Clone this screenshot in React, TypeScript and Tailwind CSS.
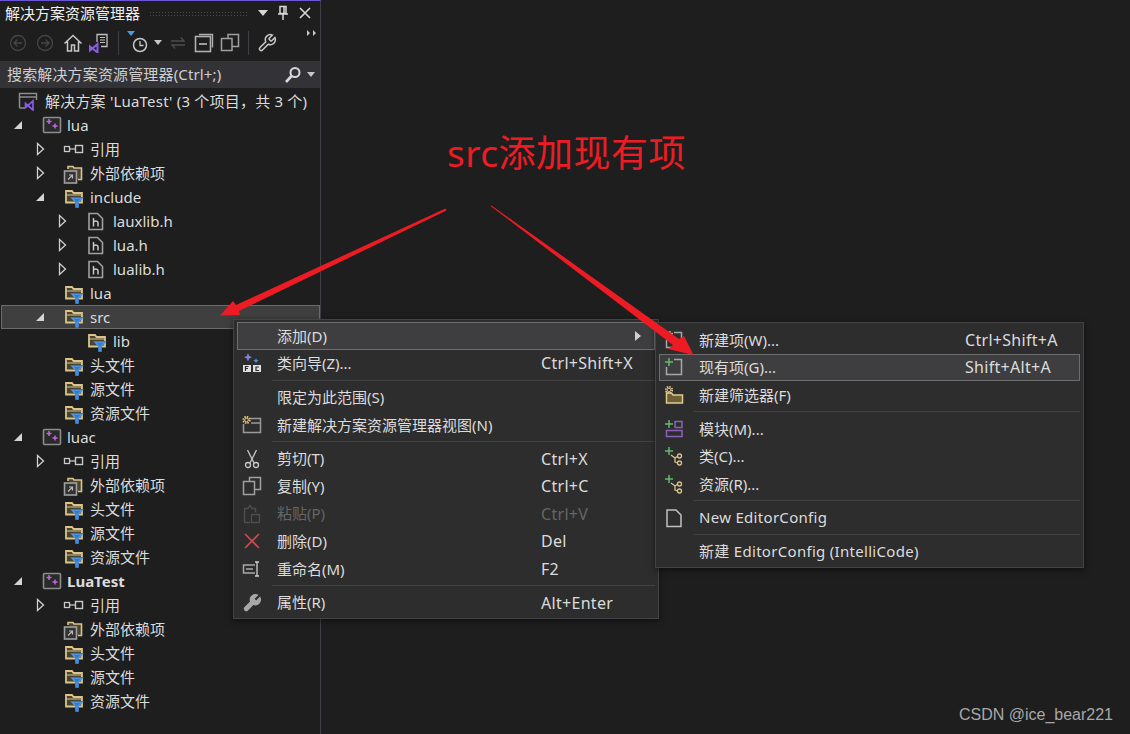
import type { ReactNode } from 'react';

const uiFont = "font-['Noto_Sans','Noto_Sans_CJK_SC',sans-serif]";
const wrenchPath = 'M14.700 6.300a1 1 0 0 0 0 1.400l1.600 1.600a1 1 0 0 0 1.400 0l3.770-3.770a6 6 0 0 1-7.940 7.940l-6.910 6.910a2.120 2.120 0 0 1-3-3l6.910-6.910a6 6 0 0 1 7.940-7.940l-3.760 3.760z';

function Svg({ children, w = 20, h = 20 }: { children: ReactNode; w?: number; h?: number }) {
    return (
        <svg width={w} height={h} viewBox={`0 0 ${w} ${h}`} fill="none" className="shrink-0 overflow-visible">
            {children}
        </svg>
    );
}

function FolderFilter() {
    return (
        <Svg>
            <path d="M3 15.500V4h6l1.500 2H19v9.500z" fill="#4a432f" stroke="#d8c48c" strokeWidth="1.800" />
            <path d="M3 8h16" stroke="#d8c48c" strokeWidth="1" />
            <path d="M8 10h12l-4.200 5v6h-3.600v-6z" fill="#1e1e1e" />
            <path d="M9 11h10l-4 4.500V20h-2v-4.500z" fill="#3a7cc4" stroke="#4a97e6" strokeWidth="1.500" />
        </Svg>
    );
}

function Reference() {
    return (
        <Svg>
            <rect x="1.500" y="7.500" width="5" height="5" stroke="#c8c8c8" strokeWidth="1.300" />
            <rect x="12.500" y="6.500" width="7" height="7" stroke="#c8c8c8" strokeWidth="1.400" />
            <path d="M6.500 10h6" stroke="#c8c8c8" strokeWidth="1.300" />
        </Svg>
    );
}

function ExternalDeps() {
    return (
        <Svg>
            <path d="M5 6V3.500h5l1 1.500h7.500v11.500H15" fill="#4a432f" stroke="#d8c48c" strokeWidth="1.600" />
            <rect x="1.500" y="8" width="12" height="12" fill="#333" stroke="#a0a0a0" strokeWidth="1.600" />
            <path d="M5 16.500l4-4M6 12h3.500v3.500" stroke="#b8b8b8" strokeWidth="1.200" />
        </Svg>
    );
}

function HeaderFile() {
    return (
        <Svg>
            <path d="M3 2.500h8.500l5 5v11H3z" stroke="#a0a0a0" strokeWidth="1.600" />
            <path d="M7.500 7v8.500M7.500 11c2-1.500 4.500-1 4.500 1v3.500" stroke="#c8c8c8" strokeWidth="1.500" />
        </Svg>
    );
}

function ProjectIcon() {
    return (
        <Svg>
            <rect x="1.500" y="2.500" width="17" height="15" rx="1" fill="#2a2a2a" stroke="#8d8d8d" strokeWidth="1.600" />
            <path d="M4.500 6.500h5M7 4v5M10.500 11h5M13 8.500v5" stroke="#c264e0" strokeWidth="1.500" />
        </Svg>
    );
}

function SolutionIcon() {
    return (
        <svg width="20" height="20" viewBox="0 0 20 20" fill="none" className="shrink-0">
            <path d="M7 17H2.500a1 1 0 0 1-1-1V2.500h17V9" stroke="#8d8d8d" strokeWidth="1.500" />
            <path d="M2 6h16" stroke="#8d8d8d" strokeWidth="1.500" />
            <path d="M7.500 12.500l2.500 2 5-4.500v9l-5-4.500-2.500 2z" stroke="#8a5ce6" strokeWidth="1.700" />
        </svg>
    );
}

function Gear({ x, y, color }: { x: number; y: number; color: string }) {
    return (
        <>
            <circle cx={x} cy={y} r="3.200" stroke={color} strokeWidth="1.800" strokeDasharray="1.500 1" />
            <circle cx={x} cy={y} r="1.800" stroke={color} strokeWidth="1" />
        </>
    );
}

function Expander({ open }: { open?: boolean }) {
    return open ? (
        <svg width="16" height="16" viewBox="0 0 16 16" className="shrink-0">
            <path d="M12 4v8H4z" fill="#d4d4d4" />
        </svg>
    ) : (
        <svg width="16" height="16" viewBox="0 0 16 16" fill="none" className="shrink-0">
            <path d="M5.500 2.500l6 5.500-6 5.500z" stroke="#cfcfcf" strokeWidth="1.300" />
        </svg>
    );
}

type Kind = 'project' | 'ref' | 'ext' | 'filter' | 'header';

const iconFor: Record<Kind, ReactNode> = {
    project: <ProjectIcon />,
    ref: <Reference />,
    ext: <ExternalDeps />,
    filter: <FolderFilter />,
    header: <HeaderFile />,
};

type Node = {
    text: string;
    kind: Kind;
    level: 0 | 1 | 2;
    state?: 'open' | 'closed';
    bold?: boolean;
    selected?: boolean;
};

const levelPad = { 0: 'pl-[10px]', 1: 'pl-[32px]', 2: 'pl-[54px]' };
const labelGap = { 0: 'ml-[5px]', 1: 'ml-[7px]', 2: 'ml-[7px]' };
const expanderGap = { 0: 'mr-[16px]', 1: 'mr-[15px]', 2: 'mr-[16px]' };

const projectChildren = (): Node[] => [
    { text: '头文件', kind: 'filter', level: 1 },
    { text: '源文件', kind: 'filter', level: 1 },
    { text: '资源文件', kind: 'filter', level: 1 },
];

const tree: Node[] = [
    { text: 'lua', kind: 'project', level: 0, state: 'open' },
    { text: '引用', kind: 'ref', level: 1, state: 'closed' },
    { text: '外部依赖项', kind: 'ext', level: 1, state: 'closed' },
    { text: 'include', kind: 'filter', level: 1, state: 'open' },
    { text: 'lauxlib.h', kind: 'header', level: 2, state: 'closed' },
    { text: 'lua.h', kind: 'header', level: 2, state: 'closed' },
    { text: 'lualib.h', kind: 'header', level: 2, state: 'closed' },
    { text: 'lua', kind: 'filter', level: 1 },
    { text: 'src', kind: 'filter', level: 1, state: 'open', selected: true },
    { text: 'lib', kind: 'filter', level: 2 },
    ...projectChildren(),
    { text: 'luac', kind: 'project', level: 0, state: 'open' },
    { text: '引用', kind: 'ref', level: 1, state: 'closed' },
    { text: '外部依赖项', kind: 'ext', level: 1 },
    ...projectChildren(),
    { text: 'LuaTest', kind: 'project', level: 0, state: 'open', bold: true },
    { text: '引用', kind: 'ref', level: 1, state: 'closed' },
    { text: '外部依赖项', kind: 'ext', level: 1 },
    ...projectChildren(),
];

function TreeRow({ node }: { node: Node }) {
    const rowClass = node.selected
        ? 'bg-[#3f3f3f] border border-[#6b6b6b] ml-[1px] pl-[30px]'
        : levelPad[node.level];
    return (
        <div className={`h-6 flex items-center ${rowClass}`}>
            <div className={`w-4 h-4 ${expanderGap[node.level]} shrink-0`}>
                {node.state && <Expander open={node.state === 'open'} />}
            </div>
            {iconFor[node.kind]}
            <span className={`${labelGap[node.level]} text-[15px] ${node.bold ? 'font-bold' : ''}`}>{node.text}</span>
        </div>
    );
}

function TitleBar() {
    return (
        <div className="h-6 flex items-center pl-[5px] pr-[8px] shrink-0">
            <span className="text-[15px] text-[#f0f0f0]">解决方案资源管理器</span>
            <div className="ml-[9px] w-[98px] h-[5px] bg-[radial-gradient(#4a4a4a_1px,transparent_1px)] bg-[length:3px_3px]" />
            <svg width="14" height="8" viewBox="0 0 14 8" className="ml-[9px]">
                <path d="M2 1h10L7 7z" fill="#d8d8d8" />
            </svg>
            <svg width="14" height="16" viewBox="0 0 14 16" fill="none" className="ml-[6px]">
                <path d="M4 1.500h6v7H4zM2 9h10M7 9v6M8 2v6" stroke="#d8d8d8" strokeWidth="1.500" />
            </svg>
            <svg width="14" height="14" viewBox="0 0 14 14" fill="none" className="ml-[8px]">
                <path d="M2 2l10 10M12 2L2 12" stroke="#d8d8d8" strokeWidth="1.600" />
            </svg>
        </div>
    );
}

function Toolbar() {
    return (
        <div className="h-[33px] pt-[2px] relative flex items-center pl-[8px] shrink-0">
            <svg width="20" height="20" viewBox="0 0 20 20" fill="none">
                <circle cx="10" cy="10" r="7.500" stroke="#454545" strokeWidth="1.300" />
                <path d="M14 10H6.500M9.500 6.500L6 10l3.500 3.500" stroke="#454545" strokeWidth="1.300" />
            </svg>
            <svg width="20" height="20" viewBox="0 0 20 20" fill="none" className="ml-[7px]">
                <circle cx="10" cy="10" r="7.500" stroke="#454545" strokeWidth="1.300" />
                <path d="M6 10h7.500M10.500 6.500L14 10l-3.500 3.500" stroke="#454545" strokeWidth="1.300" />
            </svg>
            <svg width="20" height="20" viewBox="0 0 20 20" fill="none" className="ml-[8px]">
                <path d="M1.500 10.500L10 2.500l8.500 8M4.500 8.500V18h4v-6h3v6h4V8.500" stroke="#c8c8c8" strokeWidth="1.500" />
            </svg>
            <svg width="20" height="20" viewBox="0 0 20 20" fill="none" className="ml-[6px]">
                <path d="M8 9V1.500h10v12h-6" stroke="#c0c0c0" strokeWidth="1.300" />
                <path d="M11 4.500h5M11 7h5M11 9.500h5" stroke="#c0c0c0" strokeWidth="1.200" />
                <path d="M1 13.500l2.500 2 5-4.500v8.500l-5-4-2.500 2z" stroke="#8a5ce6" strokeWidth="2" />
            </svg>
            <div className="ml-[9px] w-px h-6 bg-[#3f3f46]" />
            <svg width="26" height="26" viewBox="0 0 26 26" fill="none" className="ml-[7px]">
                <path d="M1 1h8L5 6z" fill="#4a9be0" />
                <circle cx="14" cy="15" r="6.500" stroke="#c8c8c8" strokeWidth="1.500" />
                <path d="M14 11v4.500h3.500" stroke="#c8c8c8" strokeWidth="1.300" />
            </svg>
            <svg width="8" height="5" viewBox="0 0 8 5" className="ml-[2px]">
                <path d="M0 0h8L4 5z" fill="#c8c8c8" />
            </svg>
            <svg width="16" height="14" viewBox="0 0 16 14" fill="none" className="ml-[8px]">
                <path d="M1 5h13L11 1.500M15 9H2l3 3.500" stroke="#4e4e4e" strokeWidth="1.300" />
            </svg>
            <svg width="20" height="20" viewBox="0 0 20 20" fill="none" className="ml-[8px]">
                <path d="M5 1.500h13.500v13" stroke="#b0b0b0" strokeWidth="1.400" />
                <rect x="1.500" y="3.500" width="15" height="15" stroke="#b0b0b0" strokeWidth="1.600" />
                <path d="M5 11h8" stroke="#c8c8c8" strokeWidth="1.500" />
            </svg>
            <svg width="20" height="20" viewBox="0 0 20 20" fill="none" className="ml-[6px]">
                <rect x="8" y="1.500" width="10.500" height="12" stroke="#a0a0a0" strokeWidth="1.500" />
                <rect x="1.500" y="5.500" width="10.500" height="12" fill="#1e1e1e" stroke="#a0a0a0" strokeWidth="1.500" />
            </svg>
            <div className="ml-[8px] w-px h-6 bg-[#3f3f46]" />
            <svg width="20" height="20" viewBox="0 0 24 24" fill="none" className="ml-[8px]">
                <path d={wrenchPath} stroke="#c8c8c8" strokeWidth="1.800" />
            </svg>
            <svg width="10" height="6" viewBox="0 0 10 6" className="absolute right-[3px] top-[5px]">
                <path d="M0 0l3 3-3 3zM6 0l3 3-3 3z" fill="#c8c8c8" />
            </svg>
        </div>
    );
}

function SearchBar() {
    return (
        <div className="h-[27px] mt-[3px] bg-[#333337] flex items-center pl-[7px] pr-[5px] shrink-0">
            <span className="text-[15px] text-[#cfcfcf] flex-1 tracking-[0.15px]">搜索解决方案资源管理器(Ctrl+;)</span>
            <svg width="18" height="18" viewBox="0 0 18 18" fill="none">
                <circle cx="11" cy="6.500" r="4.500" stroke="#d8d8d8" strokeWidth="2" />
                <path d="M7.500 10L2 16" stroke="#d8d8d8" strokeWidth="2.600" />
            </svg>
            <svg width="8" height="5" viewBox="0 0 8 5" className="ml-[5px]">
                <path d="M0 0h8L4 5z" fill="#c8c8c8" />
            </svg>
        </div>
    );
}

function Sep({ left }: { left: string }) {
    return <div className={`h-[6.200px] flex items-center ${left}`}><div className="h-px w-full bg-[#434346]" /></div>;
}

function MenuRow({ icon, label, keys, active, disabled, arrow, labelClass, iconClass }: {
    icon?: ReactNode;
    label: string;
    keys?: string;
    active?: boolean;
    disabled?: boolean;
    arrow?: boolean;
    labelClass: string;
    iconClass: string;
}) {
    return (
        <div className={`h-[27.600px] flex items-center relative border ${active ? 'bg-[#3e3e40] border-[#6e6e6e]' : 'border-transparent'} ${disabled ? 'text-[#656565]' : ''}`}>
            <div className={`shrink-0 flex justify-center ${iconClass}`}>{icon}</div>
            <span className={`${labelClass} text-[15px] whitespace-nowrap`}>{label}</span>
            {keys && <span className="text-[16px] tracking-[0.3px] whitespace-nowrap">{keys}</span>}
            {arrow && (
                <svg width="6" height="10" viewBox="0 0 6 10" className="absolute right-[13px] top-[8px]">
                    <path d="M0 0l6 5-6 5z" fill="#d0d0d0" />
                </svg>
            )}
        </div>
    );
}

function ContextMenu() {
    const row = { labelClass: 'w-[264px]', iconClass: 'w-[39px] pr-[12px]' };
    const sep = 'ml-[35px]';
    return (
        <div className="absolute left-[233px] top-[319px] w-[426px] h-[300px] bg-[#2d2d2d] border border-[#434346] px-[3px] pt-[2px] shadow-[0_2px_6px_rgba(0,0,0,0.5)]">
            <MenuRow {...row} label="添加(D)" active arrow />
            <MenuRow {...row} label="类向导(Z)..." keys="Ctrl+Shift+X" icon={
                <svg width="20" height="22" viewBox="0 0 20 22" fill="none">
                    <path d="M6 1l1.200 3L10 5.200 7.200 6.400 6 9.500 4.800 6.400 2 5.200 4.800 4z" fill="#7c83e0" />
                    <path d="M14 6l.800 2 2 .800-2 .800-.800 2-.800-2-2-.800 2-.800z" fill="#4a9be0" />
                    <rect x="1" y="13" width="8" height="7" fill="#e0e0e0" />
                    <rect x="11" y="13" width="8" height="7" fill="#e0e0e0" />
                    <path d="M3.500 19v-4.500h3M3.500 16.500h2.500M17 15h-3v3.500h3" stroke="#2d2d2d" strokeWidth="1.200" />
                </svg>
            } />
            <Sep left={sep} />
            <MenuRow {...row} label="限定为此范围(S)" />
            <MenuRow {...row} label="新建解决方案资源管理器视图(N)" icon={
                <svg width="20" height="18" viewBox="0 0 20 18" fill="none">
                    <path d="M8 2.500h10.500v14h-17V8" stroke="#9a9a9a" strokeWidth="1.500" />
                    <path d="M9 7h9" stroke="#9a9a9a" strokeWidth="1.500" />
                    <Gear x={4.500} y={4} color="#e8c877" />
                </svg>
            } />
            <Sep left={sep} />
            <MenuRow {...row} label="剪切(T)" keys="Ctrl+X" icon={
                <svg width="16" height="20" viewBox="0 0 16 20" fill="none">
                    <path d="M3.500 1l6.500 13M12.500 1L6 14" stroke="#c8c8c8" strokeWidth="1.300" />
                    <circle cx="4" cy="16" r="2.500" stroke="#c8c8c8" strokeWidth="1.300" />
                    <circle cx="12" cy="16" r="2.500" stroke="#c8c8c8" strokeWidth="1.300" />
                </svg>
            } />
            <MenuRow {...row} label="复制(Y)" keys="Ctrl+C" icon={
                <svg width="20" height="20" viewBox="0 0 20 20" fill="none">
                    <rect x="7.500" y="1.500" width="11" height="12" stroke="#a0a0a0" strokeWidth="1.500" />
                    <rect x="1.500" y="5.500" width="11" height="13" fill="#2d2d2d" stroke="#a0a0a0" strokeWidth="1.500" />
                </svg>
            } />
            <MenuRow {...row} disabled label="粘贴(P)" keys="Ctrl+V" icon={
                <svg width="18" height="20" viewBox="0 0 18 20" fill="none">
                    <path d="M7 18.500H1.500V4.500H5L7 1.500 9 4.500h3.500v4" stroke="#4e4e4e" strokeWidth="1.400" />
                    <rect x="8.500" y="10.500" width="8" height="8" stroke="#4e4e4e" strokeWidth="1.400" />
                </svg>
            } />
            <MenuRow {...row} label="删除(D)" keys="Del" icon={
                <svg width="16" height="16" viewBox="0 0 16 16" fill="none">
                    <path d="M1 1l14 14M15 1L1 15" stroke="#d04a4f" strokeWidth="1.600" />
                </svg>
            } />
            <MenuRow {...row} label="重命名(M)" keys="F2" icon={
                <svg width="20" height="16" viewBox="0 0 20 16" fill="none">
                    <path d="M13 4H1.500v8H13" stroke="#a8a8a8" strokeWidth="1.500" />
                    <path d="M4 8h7" stroke="#a8a8a8" strokeWidth="1.500" />
                    <path d="M13 1h4M15 1v14M13 15h4" stroke="#d0d0d0" strokeWidth="1.300" />
                </svg>
            } />
            <Sep left={sep} />
            <MenuRow {...row} label="属性(R)" keys="Alt+Enter" icon={
                <svg width="20" height="20" viewBox="0 0 24 24" fill="none">
                    <path d={wrenchPath} fill="#a8a8a8" stroke="#a8a8a8" strokeWidth="1.500" />
                </svg>
            } />
        </div>
    );
}

function PlusCorner() {
    return <path d="M5 1v8M1 5h8" stroke="#63b96a" strokeWidth="1.500" />;
}

function Connectors() {
    return (
        <svg width="20" height="20" viewBox="0 0 20 20" fill="none">
            <PlusCorner />
            <path d="M7 9l4 3 3-2M11 12v4l3 1" stroke="#d8c48c" strokeWidth="1.300" />
            <circle cx="15.500" cy="10" r="2" stroke="#d8c48c" strokeWidth="1.300" />
            <circle cx="15.500" cy="17" r="2" stroke="#d8c48c" strokeWidth="1.300" />
        </svg>
    );
}

function SubMenu() {
    const row = { labelClass: 'w-[266px]', iconClass: 'w-[39px] pr-[12px]' };
    const sep = 'ml-[35px]';
    const latinLabel = 'w-[266px] tracking-[0.3px]';
    const itemIcon = (
        <svg width="20" height="20" viewBox="0 0 20 20" fill="none">
            <path d="M10 2.500h7.500v15h-15V10" stroke="#a8a8a8" strokeWidth="1.500" />
            <PlusCorner />
        </svg>
    );
    return (
        <div className="absolute left-[655px] top-[322px] w-[429px] h-[246px] bg-[#2d2d2d] border border-[#434346] p-[3px] shadow-[0_2px_6px_rgba(0,0,0,0.5)]">
            <MenuRow {...row} label="新建项(W)..." keys="Ctrl+Shift+A" icon={
                <svg width="20" height="20" viewBox="0 0 20 20" fill="none">
                    <path d="M10 2.500h7.500v15h-15V10" stroke="#a8a8a8" strokeWidth="1.500" />
                    <Gear x={5} y={5} color="#d8c48c" />
                </svg>
            } />
            <MenuRow {...row} label="现有项(G)..." keys="Shift+Alt+A" active icon={itemIcon} />
            <MenuRow {...row} label="新建筛选器(F)" icon={
                <svg width="20" height="20" viewBox="0 0 20 20" fill="none">
                    <path d="M2.500 18V8h5l1.500 2h9.500v8z" fill="#6e5f38" stroke="#e0cc90" strokeWidth="1.500" />
                    <Gear x={5} y={5} color="#d8c48c" />
                </svg>
            } />
            <Sep left={sep} />
            <MenuRow {...row} label="模块(M)..." icon={
                <svg width="20" height="20" viewBox="0 0 20 20" fill="none">
                    <PlusCorner />
                    <rect x="11" y="2.500" width="7" height="6" stroke="#8a63b8" strokeWidth="1.500" />
                    <rect x="2.500" y="11.500" width="15.500" height="6" stroke="#8a63b8" strokeWidth="1.500" />
                </svg>
            } />
            <MenuRow {...row} label="类(C)..." icon={<Connectors />} />
            <MenuRow {...row} label="资源(R)..." icon={<Connectors />} />
            <Sep left={sep} />
            <MenuRow {...row} labelClass={latinLabel} label="New EditorConfig" icon={
                <svg width="18" height="20" viewBox="0 0 18 20" fill="none">
                    <path d="M2 2h9l5 5v11.500H2z" fill="#2d2d2d" stroke="#c0c0c0" strokeWidth="1.500" />
                </svg>
            } />
            <Sep left={sep} />
            <MenuRow {...row} labelClass={latinLabel} label="新建 EditorConfig (IntelliCode)" />
        </div>
    );
}

function Arrows() {
    return (
        <svg width="1130" height="734" viewBox="0 0 1130 734" className="absolute inset-0 pointer-events-none">
            <path d="M445.500 208.500L446.500 210.500L239 311L240 315L220 315.500L233 301L236 305z" fill="#ed1c24" />
            <path d="M490.500 206L491.500 205.500L679 339L684 336L693.500 355L668 349L673 345z" fill="#ed1c24" />
        </svg>
    );
}

export default function App() {
    return (
        <div className={`relative w-[1130px] h-[734px] bg-[#1e1e1e] overflow-hidden flex text-[#dcdcdc] ${uiFont}`}>
            <aside className="w-[321px] h-full border-r border-[#3f3f46] border-t-[1px] border-t-[#6a56d8] flex flex-col">
                <TitleBar />
                <Toolbar />
                <SearchBar />
                <div className="mt-[1px] flex flex-col">
                    <div className="h-6 flex items-center pl-[18px]">
                        <SolutionIcon />
                        <span className="ml-[7px] text-[15px] tracking-[0.2px]">解决方案 'LuaTest' (3 个项目，共 3 个)</span>
                    </div>
                    {tree.map((n, i) => (
                        <TreeRow key={i} node={n} />
                    ))}
                </div>
            </aside>
            <ContextMenu />
            <SubMenu />
            <div className="absolute left-[447px] top-[128px] text-[37px] tracking-[0.5px] leading-[50px] text-[#ed1c24] whitespace-nowrap">src添加现有项</div>
            <div className="absolute right-[17px] top-[704px] font-['Liberation_Sans',sans-serif] text-[16px] leading-[22px] text-[#a8a8a8] whitespace-nowrap">CSDN @ice_bear221</div>
            <Arrows />
        </div>
    );
}
